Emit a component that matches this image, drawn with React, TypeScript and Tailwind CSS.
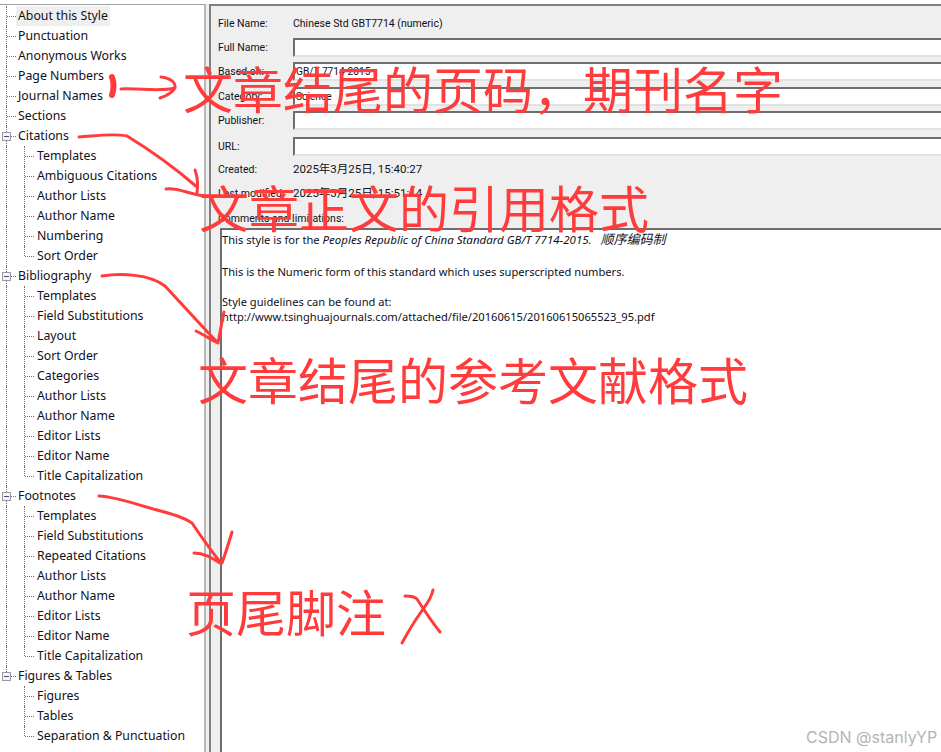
const FONT = "font-['Noto_Sans','Noto_Sans_CJK_SC',sans-serif]";

type Node = { label: string; children?: string[] };

const tree: Node[] = [
  { label: "About this Style" },
  { label: "Punctuation" },
  { label: "Anonymous Works" },
  { label: "Page Numbers" },
  { label: "Journal Names" },
  { label: "Sections" },
  { label: "Citations", children: ["Templates", "Ambiguous Citations", "Author Lists", "Author Name", "Numbering", "Sort Order"] },
  {
    label: "Bibliography",
    children: ["Templates", "Field Substitutions", "Layout", "Sort Order", "Categories", "Author Lists", "Author Name", "Editor Lists", "Editor Name", "Title Capitalization"],
  },
  {
    label: "Footnotes",
    children: ["Templates", "Field Substitutions", "Repeated Citations", "Author Lists", "Author Name", "Editor Lists", "Editor Name", "Title Capitalization"],
  },
  { label: "Figures & Tables", children: ["Figures", "Tables", "Separation & Punctuation"] },
];

// one dotted guide cell: vertical line plus the tick to the label
function Guide({ last, tick, width }: { last?: boolean; tick?: boolean; width: string }) {
  return (
    <div className={`relative h-5 shrink-0 ${width}`}>
      <div className={`absolute left-[6px] top-0 border-l border-dotted border-[#707070] ${last ? "h-[10px]" : "h-5"}`} />
      {tick && <div className="absolute left-[7px] top-[10px] w-[9px] border-t border-dotted border-[#707070]" />}
    </div>
  );
}

function Expander() {
  return (
    <div className="absolute left-[2px] top-[6px] flex h-[9px] w-[9px] items-center justify-center border border-[#9a9a9a] bg-[#f4f4f4]">
      <div className="h-px w-[5px] bg-[#3c4f8c]" />
    </div>
  );
}

function TreeRows() {
  return (
    <div className="pt-[1px]">
      {tree.map((node, i) => {
        const lastRoot = i === tree.length - 1;
        return (
          <div key={node.label}>
            <div className="flex h-5 items-center">
              <div className="relative h-5">
                <Guide width="w-[18px]" tick last={lastRoot} />
                {node.children && <Expander />}
              </div>
              <span className={`-mx-[2px] px-[2px] leading-5 ${i === 0 ? "bg-[#efefef]" : ""}`}>{node.label}</span>
            </div>
            {node.children?.map((child, j) => (
              <div key={child} className="flex h-5 items-center">
                {lastRoot ? <div className="w-[18px] shrink-0" /> : <Guide width="w-[18px]" />}
                <Guide width="w-[19px]" tick last={j === node.children!.length - 1} />
                <span className="leading-5">{child}</span>
              </div>
            ))}
          </div>
        );
      })}
    </div>
  );
}

function Field({ label, value, mt }: { label: string; value?: string; mt: string }) {
  return (
    <div className={`flex h-[19px] items-center ${mt}`}>
      <span className="w-[75px] shrink-0 whitespace-nowrap">{label}</span>
      <div className="flex h-[19px] flex-1 items-center border-t-2 border-b-2 border-l-2 border-t-[#6e6e6e] border-b-[#e2e2e2] border-l-[#6e6e6e] bg-white pl-[1px] text-[10.2px]">
        {value}
      </div>
    </div>
  );
}

function Annotations() {
  return (
    <>
      <svg className="absolute inset-0" width="941" height="752" fill="none" stroke="#ff3b3b" strokeLinecap="round" strokeLinejoin="round">
        <path d="M112 77 C114 82 114 90 112 95" strokeWidth="6" />
        <path d="M121 89 C140 88 160 92 175 88 C176 82 170 78 161 77 M175 88 C172 93 166 96 160 98" strokeWidth="3" />
        <path d="M79 137 C95 136 112 133 127 136 C150 150 175 168 197 187 M195 170 C198 178 198 186 197 193 M166 189 C178 187 190 195 205 196" strokeWidth="3" />
        <path d="M102 276 C120 273 150 274 165 286 C180 302 205 330 218 343 M224 312 C222 322 220 332 218 343 M196 331 C204 335 212 340 218 343" strokeWidth="3" />
        <path d="M99 496 C117 497 135 504 157 510 C172 514 183 517 192 523 C198 532 207 545 220 562 M232 532 C229 542 226 552 222 563 M194 553 C204 553 212 558 220 563" strokeWidth="3" />
        <path d="M405 596 C410 596 414 596 417 599 C424 610 432 622 440 632 M433 590 C431 600 425 606 421 612 C414 622 408 632 402 643" strokeWidth="3" />
      </svg>
      <div className="absolute left-[183px] top-[52px] whitespace-nowrap text-[50px] leading-[76px] text-[#ff3b3b]">文章结尾的页码，期刊名字</div>
      <div className="absolute left-[199px] top-[171px] whitespace-nowrap text-[50px] leading-[76px] text-[#ff3b3b]">文章正文的引用格式</div>
      <div className="absolute left-[198px] top-[343px] whitespace-nowrap text-[50px] leading-[76px] text-[#ff3b3b]">文章结尾的参考文献格式</div>
      <div className="absolute left-[186px] top-[575px] whitespace-nowrap text-[50px] leading-[76px] text-[#ff3b3b]">页尾脚注</div>
      <div className="absolute left-[806px] top-[725px] whitespace-nowrap font-['Inter',sans-serif] text-[16px] leading-6 text-[#b4b4b4]">CSDN @stanlyYP</div>
    </>
  );
}

export default function App() {
  return (
    <div className={`relative h-[752px] w-[941px] overflow-hidden bg-white text-[12.3px] text-[#101020] ${FONT}`}>
      <div className="flex h-full pt-[4px]">
        <div className="h-full w-[206px] shrink-0 border-t border-r-2 border-t-[#a0a0a0] border-r-[#b8b8b8] bg-white">
          <TreeRows />
        </div>
        <div className="w-[3px] shrink-0 bg-[#efefef]" />
        <div className="flex min-w-0 flex-1 flex-col border-t-2 border-l-2 border-t-[#808080] border-l-[#808080] bg-[#efefef] pl-[7px] font-['Roboto','Noto_Sans_CJK_SC',sans-serif] text-[10.5px]">
          <div className="mt-[8px] flex h-5 items-center">
            <span className="w-[75px] shrink-0">File Name:</span>
            <span>Chinese Std GBT7714 (numeric)</span>
          </div>
          <Field label="Full Name:" mt="mt-[4px]" />
          <Field label="Based on:" value="GB/T 7714-2015" mt="mt-[5px]" />
          <Field label="Category:" value="Science" mt="mt-[6px]" />
          <Field label="Publisher:" mt="mt-[5px]" />
          <Field label="URL:" mt="mt-[7px]" />
          <div className="mt-[4px] flex h-5 items-center">
            <span className="w-[75px] shrink-0">Created:</span>
            <span className="text-[11.5px]">2025年3月25日, 15:40:27</span>
          </div>
          <div className="mt-[4px] flex h-5 items-center">
            <span className="w-[75px] shrink-0 whitespace-nowrap">Last modified:</span>
            <span className="text-[11.5px]">2025年3月25日, 15:51:14</span>
          </div>
          <div className="mt-[7px] flex h-[15px] items-center">Comments and limitations:</div>
          <div className={`ml-[2px] mt-[2px] flex-1 border-t-2 border-l-2 border-t-[#6e6e6e] border-l-[#6e6e6e] bg-white pt-[2px] text-[11.15px] leading-[15px] ${FONT}`}>
            <p>
              This style is for the{" "}
              <i className="text-[11.5px]">
                Peoples Republic of China Standard GB/T 7714-2015.<span className="ml-[9px] text-[13px]">顺序编码制</span>
              </i>
            </p>
            <p className="mt-[17px]">This is the Numeric form of this standard which uses superscripted numbers.</p>
            <p className="mt-[15px]">Style guidelines can be found at:</p>
            <p>http://www.tsinghuajournals.com/attached/file/20160615/20160615065523_95.pdf</p>
          </div>
        </div>
      </div>
      <Annotations />
    </div>
  );
}
